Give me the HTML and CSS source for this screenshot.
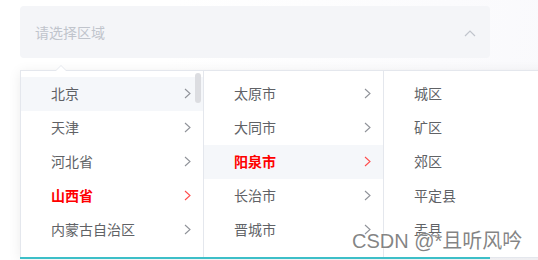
FILE: index.html
```html
<!DOCTYPE html>
<html lang="zh-CN">
<head>
    <meta charset="UTF-8">
    <title>区域选择</title>
    <link rel="stylesheet" href="styles.css">
</head>
<body>
    <div class="page">
        <div class="select">
            <span class="placeholder">请选择区域</span>
            <svg class="arrow-up" width="12" height="8" viewBox="0 0 12 8"><path d="M1 7 L6 2 L11 7" fill="none" stroke="#c0c4cc" stroke-width="1.2"/></svg>
        </div>

        <div class="panel">
            <ul class="col col-1">
                <li class="item hover">北京<svg class="chev" width="7" height="11" viewBox="0 0 7 11"><path d="M1 1 L6 5.5 L1 10" fill="none" stroke="currentColor" stroke-width="1.1"/></svg></li>
                <li class="item">天津<svg class="chev" width="7" height="11" viewBox="0 0 7 11"><path d="M1 1 L6 5.5 L1 10" fill="none" stroke="currentColor" stroke-width="1.1"/></svg></li>
                <li class="item">河北省<svg class="chev" width="7" height="11" viewBox="0 0 7 11"><path d="M1 1 L6 5.5 L1 10" fill="none" stroke="currentColor" stroke-width="1.1"/></svg></li>
                <li class="item active">山西省<svg class="chev" width="7" height="11" viewBox="0 0 7 11"><path d="M1 1 L6 5.5 L1 10" fill="none" stroke="currentColor" stroke-width="1.1"/></svg></li>
                <li class="item">内蒙古自治区<svg class="chev" width="7" height="11" viewBox="0 0 7 11"><path d="M1 1 L6 5.5 L1 10" fill="none" stroke="currentColor" stroke-width="1.1"/></svg></li>
                <li class="thumb"></li>
            </ul>
            <ul class="col col-2">
                <li class="item">太原市<svg class="chev" width="7" height="11" viewBox="0 0 7 11"><path d="M1 1 L6 5.5 L1 10" fill="none" stroke="currentColor" stroke-width="1.1"/></svg></li>
                <li class="item">大同市<svg class="chev" width="7" height="11" viewBox="0 0 7 11"><path d="M1 1 L6 5.5 L1 10" fill="none" stroke="currentColor" stroke-width="1.1"/></svg></li>
                <li class="item active hover">阳泉市<svg class="chev" width="7" height="11" viewBox="0 0 7 11"><path d="M1 1 L6 5.5 L1 10" fill="none" stroke="currentColor" stroke-width="1.1"/></svg></li>
                <li class="item">长治市<svg class="chev" width="7" height="11" viewBox="0 0 7 11"><path d="M1 1 L6 5.5 L1 10" fill="none" stroke="currentColor" stroke-width="1.1"/></svg></li>
                <li class="item">晋城市<svg class="chev" width="7" height="11" viewBox="0 0 7 11"><path d="M1 1 L6 5.5 L1 10" fill="none" stroke="currentColor" stroke-width="1.1"/></svg></li>
            </ul>
            <ul class="col col-3">
                <li class="item">城区</li>
                <li class="item">矿区</li>
                <li class="item">郊区</li>
                <li class="item">平定县</li>
                <li class="item">盂县</li>
            </ul>
        </div>

        <div class="bar"></div>
        <div class="watermark">CSDN @*且听风吟</div>
    </div>
</body>
</html>
```

FILE: styles.css
```css
html, body {
    margin: 0;
    padding: 0;
    overflow: hidden;
}

body {
    width: 538px;
    height: 260px;
    background: linear-gradient(100deg, #ffffff 30%, #f9f9fc 100%);
    font-family: "Noto Sans CJK SC", "Noto Sans", sans-serif;
    font-size: 14px;
    color: #606266;
}

.page {
    position: relative;
    height: 260px;
    padding: 6px 0 0 20px;
    box-sizing: border-box;
}

.select {
    width: 470px;
    height: 52px;
    box-sizing: border-box;
    padding: 0 14px 0 15px;
    background-color: #f4f5f8;
    border-radius: 4px;
    display: flex;
    align-items: center;
    justify-content: space-between;
}

.placeholder {
    color: #c0c4cc;
    margin-top: -1px;
}

.arrow-up {
    margin-top: 2px;
}

.panel {
    position: relative;
    margin-top: 12px;
    width: 540px;
    height: 188px;
    box-sizing: border-box;
    border: 1px solid #e4e7ed;
    background-color: #fff;
    box-shadow: 0 2px 12px rgba(0, 0, 0, 0.08);
    display: flex;
}

.panel::before,
.panel::after {
    content: "";
    position: absolute;
    left: 34px;
    width: 0;
    height: 0;
    border: 6px solid transparent;
    border-top: none;
}

.panel::before {
    top: -6px;
    border-bottom-color: #e4e7ed;
}

.panel::after {
    top: -5px;
    border-bottom-color: #fff;
}

.col {
    position: relative;
    list-style: none;
    margin: 0;
    padding: 6px 0;
    height: 100%;
    box-sizing: border-box;
    border-right: 1px solid #e4e7ed;
}

.col-1 {
    width: 183px;
}

.col-2 {
    width: 180px;
}

.col-3 {
    flex: 1;
    border-right: none;
}

.item {
    height: 34px;
    box-sizing: border-box;
    padding: 0 12px 2px 30px;
    display: flex;
    align-items: center;
    justify-content: space-between;
}

.item .chev {
    color: #909399;
    margin-top: 1px;
}

.hover {
    background-color: #f5f7fa;
}

.active {
    color: #ff0000;
    font-weight: bold;
}

.active .chev {
    color: #ff4d4d;
}

.thumb {
    position: absolute;
    top: 2px;
    right: 2px;
    width: 6px;
    height: 30px;
    border-radius: 3px;
    background-color: #dcdde1;
}

.bar {
    position: absolute;
    left: 20px;
    top: 257px;
    width: 470px;
    height: 2px;
    background-color: #3dbfc8;
}

.watermark {
    position: absolute;
    left: 352px;
    top: 225px;
    font-family: "Liberation Sans", "Noto Sans CJK SC", sans-serif;
    font-size: 20px;
    color: rgba(110, 110, 110, 0.85);
    text-shadow: 0 0 2px #fff, 0 0 1px #fff;
}
```
